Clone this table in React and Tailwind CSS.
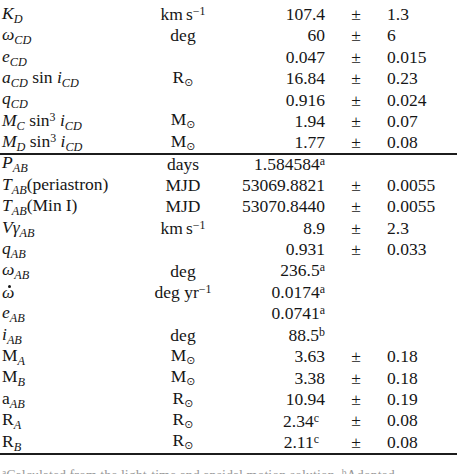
import React from "react";

// subscript / superscript helpers (vertical-align, no offsets)
function Sb({ children }) {
  return <span className="align-[-0.3em] text-[0.7em] leading-none italic">{children}</span>;
}

function Sp({ children }) {
  return <span className="align-[0.45em] text-[0.68em] leading-none">{children}</span>;
}

function I({ children }) {
  return <span className="italic">{children}</span>;
}

const Sun = () => (
  <span className="align-[-0.32em] font-['DejaVu_Sans',sans-serif] text-[0.62em] leading-none">⊙</span>
);

const kms = (
  <>
    km<span className="inline-block w-[3px]" />s<Sp>−1</Sp>
  </>
);
const Msun = (
  <>
    M<Sun />
  </>
);
const Rsun = (
  <>
    R<Sun />
  </>
);

// omega with a dot accent drawn on top
const OmegaDot = (
  <span className="inline-grid">
    <span className="italic leading-none [grid-area:1/1]">ω</span>
    <span className="mt-[1px] ml-[3px] h-[2.5px] w-[2.5px] self-start justify-self-center rounded-full bg-[#161616] [grid-area:1/1]" />
  </span>
);

const top = [
  [<><I>K</I><Sb>D</Sb></>, kms, "107.4", true, "1.3"],
  [<><I>ω</I><Sb>CD</Sb></>, "deg", "60", true, "6"],
  [<><I>e</I><Sb>CD</Sb></>, "", "0.047", true, "0.015"],
  [<><I>a</I><Sb>CD</Sb> sin <I>i</I><Sb>CD</Sb></>, Rsun, "16.84", true, "0.23"],
  [<><I>q</I><Sb>CD</Sb></>, "", "0.916", true, "0.024"],
  [<><I>M</I><Sb>C</Sb> sin<Sp>3</Sp> <I>i</I><Sb>CD</Sb></>, Msun, "1.94", true, "0.07"],
  [<><I>M</I><Sb>D</Sb> sin<Sp>3</Sp> <I>i</I><Sb>CD</Sb></>, Msun, "1.77", true, "0.08"],
];

const bottom = [
  [<><I>P</I><Sb>AB</Sb></>, "days", <>1.584584<Sp>a</Sp></>, false, ""],
  [<><I>T</I><Sb>AB</Sb>(periastron)</>, "MJD", "53069.8821", true, "0.0055"],
  [<><I>T</I><Sb>AB</Sb>(Min<span className="inline-block w-[4px]" />I)</>, "MJD", "53070.8440", true, "0.0055"],
  [<><I>Vγ</I><Sb>AB</Sb></>, kms, "8.9", true, "2.3"],
  [<><I>q</I><Sb>AB</Sb></>, "", "0.931", true, "0.033"],
  [<><I>ω</I><Sb>AB</Sb></>, "deg", <>236.5<Sp>a</Sp></>, false, ""],
  [OmegaDot, <>deg yr<Sp>−1</Sp></>, <>0.0174<Sp>a</Sp></>, false, ""],
  [<><I>e</I><Sb>AB</Sb></>, "", <>0.0741<Sp>a</Sp></>, false, ""],
  [<><I>i</I><Sb>AB</Sb></>, "deg", <>88.5<Sp>b</Sp></>, false, ""],
  [<>M<Sb>A</Sb></>, Msun, "3.63", true, "0.18"],
  [<>M<Sb>B</Sb></>, Msun, "3.38", true, "0.18"],
  [<>a<Sb>AB</Sb></>, Rsun, "10.94", true, "0.19"],
  [<>R<Sb>A</Sb></>, Rsun, <span className="pr-[6px]">2.34<Sp>c</Sp></span>, true, "0.08"],
  [<>R<Sb>B</Sb></>, Rsun, <span className="pr-[6px]">2.11<Sp>c</Sp></span>, true, "0.08"],
];

function Row({ r }) {
  const [name, unit, val, pm, err] = r;
  return (
    <div className="grid h-[21.4px] grid-cols-[140px_86px_99px_62px_70px] items-center whitespace-nowrap leading-none">
      <div className="pl-[2px]">{name}</div>
      <div className="text-center">{unit}</div>
      <div className="text-right">{val}</div>
      <div className="text-center">{pm ? "±" : ""}</div>
      <div>{err}</div>
    </div>
  );
}

export default function App() {
  return (
    <div className="h-[474px] w-[474px] overflow-hidden bg-white font-['Liberation_Serif',serif] text-[17.5px] text-[#161616]">
      <div className="w-[457px] pt-[4px]">
        {top.map((r, i) => (
          <Row key={"t" + i} r={r} />
        ))}
        <div className="-my-[1px] h-[2px] bg-[#1c1c1c]" />
        {bottom.map((r, i) => (
          <Row key={"b" + i} r={r} />
        ))}
        <div className="h-[2px] bg-[#1c1c1c]" />
      </div>
      <p className="mt-[14px] whitespace-nowrap pl-[2px] text-[14px] leading-none text-[#999]">
        <Sp>a</Sp>Calculated from the light-time and apsidal motion solution. <Sp>b</Sp>Adopted.
      </p>
    </div>
  );
}
